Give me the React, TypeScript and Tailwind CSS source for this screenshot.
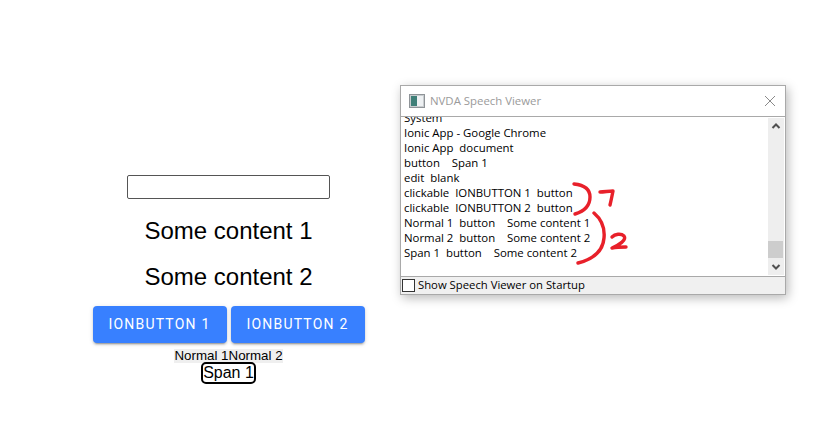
import React, { FC } from "react";

const speechLines: string[] = [
	"Ionic App - Google Chrome",
	"Ionic App  document",
	"button    Span 1",
	"edit  blank",
	"clickable  IONBUTTON 1  button",
	"clickable  IONBUTTON 2  button",
	"Normal 1  button    Some content 1",
	"Normal 2  button    Some content 2",
	"Span 1  button    Some content 2",
];

const IonButton: FC<{ label: string }> = ({ label }) => (
	<button className="mx-[2px] h-[37px] w-[134px] rounded-[4px] bg-[#3880ff] font-['Roboto',sans-serif] text-[14px] font-normal tracking-[1.2px] text-white shadow-[0_3px_1px_-2px_rgba(0,0,0,0.2),0_2px_2px_0_rgba(0,0,0,0.14),0_1px_5px_0_rgba(0,0,0,0.12)]">
		{label}
	</button>
);

const SpeechViewer: FC = () => (
	<div className="absolute left-[400px] top-[85px] flex h-[210px] w-[386px] flex-col border border-[#a9a9a9] bg-[#f0f0f0] font-['Open_Sans',sans-serif] shadow-[2px_3px_10px_rgba(0,0,0,0.28)]">
		<div className="flex h-[31px] shrink-0 items-center border-b border-[#a9a9a9] bg-white pl-[8px] pr-[8px]">
			<svg width="16" height="14" viewBox="0 0 16 14" className="mr-[5px]">
				<rect x="0.5" y="0.5" width="15" height="13" fill="#c9cdd0" stroke="#8f9498" />
				<rect x="2" y="2" width="6" height="10" fill="#3f7f78" />
				<rect x="8" y="2" width="6" height="10" fill="#eef1f3" />
			</svg>
			<span className="text-[11.4px] text-[#9a9a9a]">NVDA Speech Viewer</span>
			<svg width="12" height="12" viewBox="0 0 12 12" className="ml-auto mr-[1px]">
				<path d="M1 1 L11 11 M11 1 L1 11" stroke="#8a8a8a" strokeWidth="1" fill="none" />
			</svg>
		</div>
		<div className="flex h-[159px] shrink-0 bg-white">
			<div className="min-w-0 flex-1 overflow-hidden pl-[3px] text-[11.4px] leading-[15px] text-black">
				<div className="mt-[-7px] whitespace-pre">System</div>
				{speechLines.map((line) => (
					<div key={line} className="whitespace-pre">
						{line}
					</div>
				))}
			</div>
			<div className="mr-[1px] mt-[1px] flex h-[157px] w-[16px] flex-col bg-[#eeeeee]">
				<svg width="16" height="16" viewBox="0 0 16 16">
					<path d="M4.5 10 L8 6.5 L11.5 10" stroke="#505050" strokeWidth="2" fill="none" />
				</svg>
				<div className="mb-[1px] mt-auto h-[17px] w-[15px] bg-[#cdcdcd]" />
				<svg width="16" height="16" viewBox="0 0 16 16">
					<path d="M4.5 6 L8 9.5 L11.5 6" stroke="#505050" strokeWidth="2" fill="none" />
				</svg>
			</div>
		</div>
		<label className="flex flex-1 items-center border-t border-[#a9a9a9] pl-[1px] text-[11.3px] text-black">
			<span className="mr-[3px] h-[13px] w-[13px] border border-[#333333] bg-white" />
			Show Speech Viewer on Startup
		</label>
	</div>
);

const Annotations: FC = () => (
	<svg width="817" height="427" viewBox="0 0 817 427" className="pointer-events-none absolute left-0 top-0">
		<g stroke="#e8202a" strokeWidth="3.4" fill="none" strokeLinecap="round" strokeLinejoin="round">
			<path d="M574 184 C584 185 590 189 590 197 C590 206 585 211 575 214" />
			<path d="M600 192 C604 192 609 191 613 191 C612 196 611 201 610 205" />
			<path d="M594 213 C601 219 605 228 604 238 C603 251 594 259 578 263" />
			<path d="M612 237 C615 234 621 233 624 236 C627 240 619 245 612 248 C617 247 621 247 626 247" />
		</g>
	</svg>
);

export default function App() {
	return (
		<div className="relative h-[427px] w-[817px] overflow-hidden bg-white font-['Liberation_Sans',sans-serif] text-black">
			<main className="flex w-[457px] flex-col items-center pt-[175px]">
				<input type="text" className="h-[24px] w-[203px] rounded-[2px] border border-[#555555] bg-white" />
				<p className="mt-[18px] text-[24px] leading-[28px]">Some content 1</p>
				<p className="mt-[18px] text-[24px] leading-[28px]">Some content 2</p>
				<div className="mt-[15px] flex">
					<IonButton label="IONBUTTON 1" />
					<IonButton label="IONBUTTON 2" />
				</div>
				<div className="mt-[6px] flex h-[14px] items-center bg-[#efefef] text-[13.33px] leading-[14px]">
					<button>Normal 1</button>
					<button>Normal 2</button>
				</div>
				<span className="mt-[1px] rounded-[3px] text-[16px] leading-[18px] outline outline-2 outline-black">Span 1</span>
			</main>
			<SpeechViewer />
			<Annotations />
		</div>
	);
}
